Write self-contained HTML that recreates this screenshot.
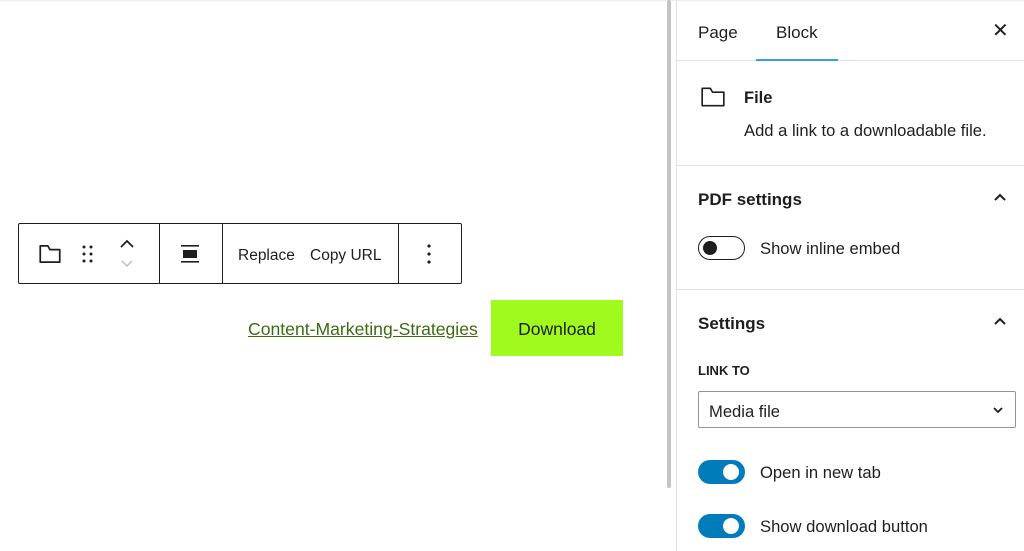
<!DOCTYPE html>
<html><head><style>
*{margin:0;padding:0;box-sizing:border-box}
body{width:1024px;height:551px;overflow:hidden;background:#fff;font-family:"Liberation Sans",sans-serif;color:#1e1e1e;position:relative;font-size:16.5px}
.a{position:absolute}
.tb{left:18px;top:223px;width:444px;height:61px;border:1px solid #1e1e1e;border-radius:2px}
.sep{top:0;width:1px;height:59px;background:#1e1e1e}
.hr{left:677px;width:347px;height:1px;background:#e0e0e0}
.tog{width:47px;height:24px;border-radius:12px}
</style></head><body>
<div class="a" style="left:0;top:0;width:1024px;height:1px;background:#eee"></div>
<div class="a" style="left:667px;top:0;width:4px;height:488px;background:#c4c4c4;border-radius:2px"></div>
<div class="a" style="left:676px;top:0;width:1px;height:551px;background:#e0e0e0"></div>

<div class="a tb">
 <svg class="a" style="left:18px;top:17px" width="26" height="26" viewBox="0 0 24 24"><path d="M3 4.5v15h18V8h-9l-2-3.5z" fill="none" stroke="#1e1e1e" stroke-width="1.6" stroke-linejoin="round"/></svg>
 <svg class="a" style="left:62px;top:20px" width="14" height="20"><g fill="#1e1e1e"><circle cx="3" cy="3" r="1.5"/><circle cx="10" cy="3" r="1.5"/><circle cx="3" cy="10" r="1.5"/><circle cx="10" cy="10" r="1.5"/><circle cx="3" cy="17" r="1.5"/><circle cx="10" cy="17" r="1.5"/></g></svg>
 <svg class="a" style="left:100px;top:14px" width="16" height="34"><path d="M2 9l6-6 6 6" fill="none" stroke="#1e1e1e" stroke-width="1.8"/><path d="M3 23l5 5 5-5" fill="none" stroke="#bbb" stroke-width="1.4"/></svg>
 <div class="a sep" style="left:140px"></div>
 <svg class="a" style="left:161px;top:20px" width="20" height="20"><rect x="1" y="1" width="18" height="1.6" fill="#1e1e1e"/><rect x="3" y="6" width="14" height="8" fill="#1e1e1e"/><rect x="1" y="17" width="18" height="1.6" fill="#1e1e1e"/></svg>
 <div class="a sep" style="left:203px"></div>
 <div class="a" style="left:219px;top:23px;font-size:15.5px">Replace</div>
 <div class="a" style="left:291px;top:23px;font-size:15.5px">Copy URL</div>
 <div class="a sep" style="left:379px"></div>
 <svg class="a" style="left:407px;top:19px" width="6" height="22"><g fill="#1e1e1e"><circle cx="3" cy="3" r="1.6"/><circle cx="3" cy="11" r="1.6"/><circle cx="3" cy="19" r="1.6"/></g></svg>
</div>

<div class="a" style="left:248px;top:319px;color:#3d6b10;text-decoration:underline;font-size:17.6px">Content-Marketing-Strategies</div>
<div class="a" style="left:491px;top:300px;width:132px;height:56px;background:#a0fa1e;color:#1e1e1e;font-size:17.5px;text-align:center;line-height:58px">Download</div>

<div class="a" style="left:698px;top:23px;font-size:17px">Page</div>
<div class="a" style="left:776px;top:23px;font-size:17px">Block</div>
<div class="a" style="left:992px;top:22px;font-size:20px;line-height:18px">✕</div>
<div class="a hr" style="top:60px"></div>
<div class="a" style="left:756px;top:59px;width:82px;height:2px;background:#3a9fd6"></div>

<svg class="a" style="left:699px;top:84px" width="28" height="26" viewBox="0 0 24 24"><path d="M2 4v16h20V7.5H11.5L9.5 4z" fill="none" stroke="#1e1e1e" stroke-width="1.5" stroke-linejoin="round"/></svg>
<div class="a" style="left:744px;top:89px;font-size:16.5px;font-weight:bold">File</div>
<div class="a" style="left:744px;top:121px;font-size:16.6px">Add a link to a downloadable file.</div>
<div class="a hr" style="top:165px"></div>

<div class="a" style="left:698px;top:190px;font-size:17px;font-weight:bold">PDF settings</div>
<svg class="a" style="left:993px;top:192px" width="14" height="10"><path d="M2 8l5-5 5 5" fill="none" stroke="#1e1e1e" stroke-width="2"/></svg>
<div class="a tog" style="left:698px;top:236px;border:1.5px solid #1e1e1e"></div>
<div class="a" style="left:703px;top:241px;width:14px;height:14px;border-radius:7px;background:#1e1e1e"></div>
<div class="a" style="left:760px;top:239px;font-size:16.6px">Show inline embed</div>
<div class="a hr" style="top:289px"></div>

<div class="a" style="left:698px;top:314px;font-size:17px;font-weight:bold">Settings</div>
<svg class="a" style="left:993px;top:316px" width="14" height="10"><path d="M2 8l5-5 5 5" fill="none" stroke="#1e1e1e" stroke-width="2"/></svg>
<div class="a" style="left:698px;top:363px;font-size:13px;font-weight:bold">LINK TO</div>
<div class="a" style="left:698px;top:391px;width:318px;height:37px;border:1px solid #949494;border-radius:2px"></div>
<div class="a" style="left:709px;top:402px;font-size:16.6px">Media file</div>
<svg class="a" style="left:992px;top:406px" width="12" height="8"><path d="M2 2l4 4 4-4" fill="none" stroke="#1e1e1e" stroke-width="1.8"/></svg>

<div class="a tog" style="left:698px;top:460px;background:#007cba"></div>
<div class="a" style="left:723px;top:464px;width:16px;height:16px;border-radius:8px;background:#fff"></div>
<div class="a" style="left:760px;top:463px;font-size:16.6px">Open in new tab</div>
<div class="a tog" style="left:698px;top:514px;background:#007cba"></div>
<div class="a" style="left:723px;top:518px;width:16px;height:16px;border-radius:8px;background:#fff"></div>
<div class="a" style="left:760px;top:517px;font-size:16.6px">Show download button</div>
</body></html>
